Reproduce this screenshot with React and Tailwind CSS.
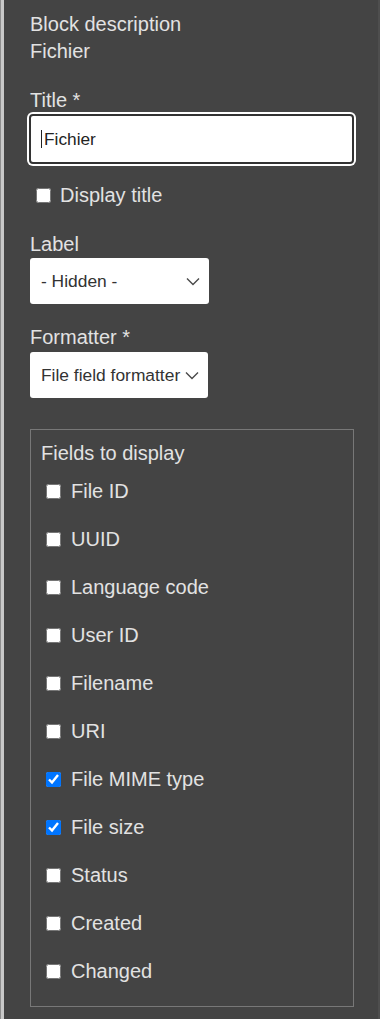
import React from 'react';

const FIELDS = [
  { id: 'fid', label: 'File ID', checked: false },
  { id: 'uuid', label: 'UUID', checked: false },
  { id: 'langcode', label: 'Language code', checked: false },
  { id: 'uid', label: 'User ID', checked: false },
  { id: 'filename', label: 'Filename', checked: false },
  { id: 'uri', label: 'URI', checked: false },
  { id: 'filemime', label: 'File MIME type', checked: true },
  { id: 'filesize', label: 'File size', checked: true },
  { id: 'status', label: 'Status', checked: false },
  { id: 'created', label: 'Created', checked: false },
  { id: 'changed', label: 'Changed', checked: false },
];

const Chevron = () => (
  <svg width="14" height="9" viewBox="0 0 14 9" fill="none" className="shrink-0">
    <path d="M1 1.5 L7 7.5 L13 1.5" stroke="#4a4a4a" strokeWidth="1.4" />
  </svg>
);

const FakeSelect = ({ value, width }) => (
  <div
    className={`flex items-center h-[46px] ${width} bg-white rounded-[3px] pl-[11px] pr-[9px] text-[17.4px] text-[#333]`}
  >
    <span className="whitespace-nowrap">{value}</span>
    <span className="ml-auto pl-[4px]">
      <Chevron />
    </span>
  </div>
);

const Checkbox = ({ checked }) => (
  <input
    type="checkbox"
    defaultChecked={checked}
    className="m-0 w-[15px] h-[15px] accent-[#0075ff] shrink-0"
  />
);

export default function App() {
  return (
    <div className="flex min-h-screen bg-[#444444] text-[#e2e2e2] font-['Liberation_Sans',Arial,sans-serif] text-[20px] leading-[27px]">
      <div className="w-px bg-[#8e8e8e]" />
      <div className="w-[3px] bg-[#c9c9c9]" />
      <div className="flex-1 pl-[26px] pt-[11px]">
        {/* Description du bloc */}
        <div>Block description</div>
        <div>Fichier</div>

        <div className="mt-[22px]">Title *</div>
        <div className="-ml-px w-[325px] h-[50px] flex items-center pl-[10px] bg-white border-2 border-[#333] rounded-[4px] ring-2 ring-white text-[17.3px] text-[#222]">
          <span className="w-px h-[18px] bg-[#222] mr-[2px]" />
          <span>Fichier</span>
        </div>

        <label className="mt-[18px] h-[27px] flex items-center">
          <span className="ml-[6px] flex">
            <Checkbox checked={false} />
          </span>
          <span className="ml-[9px]">Display title</span>
        </label>

        <div className="mt-[22px]">Label</div>
        <FakeSelect value="- Hidden -" width="w-[179px]" />

        <div className="mt-[20px]">Formatter *</div>
        <div className="mt-px">
          <FakeSelect value="File field formatter" width="w-[178px]" />
        </div>

        {/* Champs à afficher */}
        <div className="mt-[31px] w-[324px] border border-[#787878] pt-[10px] pl-[10px] pb-[11px]">
          <div>Fields to display</div>
          {FIELDS.map((f) => (
            <label key={f.id} className="h-[48px] flex items-center">
              <span className="ml-[5px] flex">
                <Checkbox checked={f.checked} />
              </span>
              <span className="ml-[10px]">{f.label}</span>
            </label>
          ))}
        </div>
      </div>
      <div className="w-[2px] bg-[#4e4e4e]" />
    </div>
  );
}
